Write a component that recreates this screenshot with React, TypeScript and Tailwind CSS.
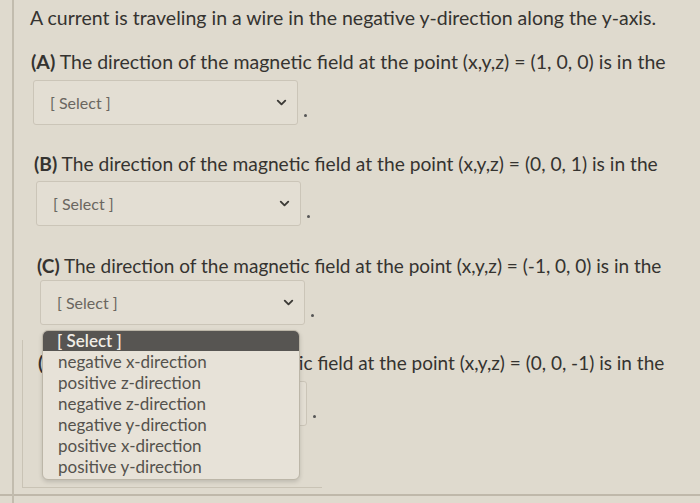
import { ChevronDown } from "lucide-react";

const options = [
  "negative x-direction",
  "positive z-direction",
  "negative z-direction",
  "negative y-direction",
  "positive x-direction",
  "positive y-direction",
];

function SelectBox({ shift }: { shift: string }) {
  return (
    <div className={`flex items-end gap-[6px] ${shift}`}>
      <div className="w-[265px] h-[45px] border border-[#cbc5b8] bg-[#e3ded3] rounded-[3px] flex items-center justify-between pl-[16px] pr-[8px]">
        <span className="text-[16px] text-[#6a6660]">[ Select ]</span>
        <ChevronDown size={15} strokeWidth={3} className="text-[#3c3a36]" />
      </div>
      <span className="mb-[8px] w-[3px] h-[3px] rounded-full bg-[#555]" />
    </div>
  );
}

function Question({ label, point, shift }: { label: string; point: string; shift: string }) {
  return (
    <p className={`leading-[24px] text-[#353330] whitespace-nowrap ${shift}`}>
      <span className="font-bold">({label})</span> The direction of the magnetic field at the point
      (x,y,z) = {point} is in the
    </p>
  );
}

export default function App() {
  return (
    <div
      className="w-[700px] h-[503px] bg-[#dfdace] relative overflow-hidden"
      style={{ fontFamily: "Lato, 'Open Sans', sans-serif" }}
    >
      <div className="absolute left-[12px] top-0 bottom-0 w-[2px] bg-[#c2bcae]" />
      <div className="h-[496px] border-b-2 border-[#bfb8aa] pt-[6px]">
        <p className="text-[19.5px] leading-[24px] text-[#353330] pl-[30px] whitespace-nowrap">
          A current is traveling in a wire in the negative y-direction along the y-axis.
        </p>
        <div className="mt-[20px]">
          <Question label="A" point="(1, 0, 0)" shift="pl-[31px] text-[19.5px]" />
          <div className="mt-[6px]">
            <SelectBox shift="pl-[33px]" />
          </div>
        </div>
        <div className="mt-[27px]">
          <Question label="B" point="(0, 0, 1)" shift="pl-[34px] text-[19.2px]" />
          <div className="mt-[5px]">
            <SelectBox shift="pl-[36px]" />
          </div>
        </div>
        <div className="mt-[28px]">
          <Question label="C" point="(-1, 0, 0)" shift="pl-[37px] text-[19px]" />
          <div className="mt-[2px]">
            <SelectBox shift="pl-[40px]" />
          </div>
        </div>
        <div className="mt-[26px]">
          <Question label="D" point="(0, 0, -1)" shift="pl-[38px] text-[19px]" />
          <div className="mt-[6px]">
            <SelectBox shift="pl-[42px]" />
          </div>
        </div>
      </div>
      <div className="absolute left-[22px] top-[340px] w-[300px] h-[148px] border-l border-b border-[#c9c3b5]" />

      <div className="absolute left-[42px] top-[330px] w-[258px] rounded-[6px] overflow-hidden border border-[#bcb6a8] bg-[#e7e2d8] shadow-[0_2px_4px_rgba(0,0,0,0.15)]">
        <div className="h-[20px] bg-[#575552] pl-[14px] text-[17px] leading-[20px] font-semibold text-[#f0ede6]">
          [ Select ]
        </div>
        <ul className="pb-[2px]">
          {options.map((o) => (
            <li key={o} className="pl-[15px] h-[21px] text-[17px] leading-[21px] text-[#55524d]">
              {o}
            </li>
          ))}
        </ul>
      </div>
    </div>
  );
}
